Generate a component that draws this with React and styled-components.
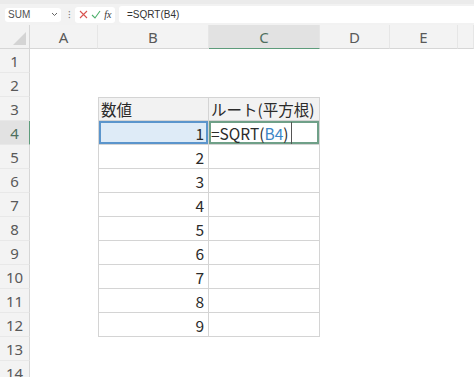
import React from "react";
import styled, { createGlobalStyle, css } from "styled-components";

const Global = createGlobalStyle`
  html, body { margin: 0; padding: 0; background: #fff; }
  body { font-family: "Noto Sans CJK JP", "Noto Sans", sans-serif; overflow: hidden; }
`;

const Page = styled.div`
  width: 474px;
  height: 377px;
  overflow: hidden;
  background: #fff;
  display: flex;
  flex-direction: column;
`;

const TopBar = styled.div`
  height: 26px;
  box-sizing: border-box;
  background: #f2f2f2;
  border-top: 4px solid #ebebeb;
  display: flex;
  align-items: center;
  padding: 2px 0 2px 5px;
  font-family: "Liberation Sans", Arial, sans-serif;
`;

const NameBox = styled.div`
  width: 56px;
  height: 14px;
  background: #fff;
  border-radius: 3px;
  display: flex;
  align-items: center;
  justify-content: space-between;
  padding: 0 3px;
  box-sizing: border-box;
  font-size: 10px;
  color: #505050;
`;

const Dots = styled.div`
  width: 12px;
  text-align: center;
  color: #777;
  font-size: 10px;
  line-height: 1;
  margin-left: 2px;
`;

const ActionBox = styled.div`
  height: 16px;
  width: 40px;
  background: #fff;
  border-radius: 3px;
  display: flex;
  align-items: center;
  justify-content: space-around;
  padding: 0 2px;
  box-sizing: border-box;
`;

const Fx = styled.span`
  font-family: "Liberation Serif", serif;
  font-style: italic;
  font-size: 10px;
  color: #333;
`;

const FormulaInput = styled.div`
  flex: 1;
  height: 17px;
  margin-left: 4px;
  background: #fff;
  border-radius: 3px 0 0 3px;
  display: flex;
  align-items: center;
  padding-left: 8px;
  font-size: 10px;
  color: #333;
`;

const Sheet = styled.div`
  display: grid;
  grid-template-columns: 30px 68px 111px 111px 70px 68px 1fr;
  grid-template-rows: repeat(15, 24px);
  flex: 1;
`;

const Corner = styled.div`
  background: #f2f2f2;
  border-bottom: 1px solid #d6d6d6;
  border-right: 1px solid #d6d6d6;
  box-sizing: border-box;
  display: flex;
  align-items: flex-end;
  justify-content: flex-end;
  padding: 0 3px 3px 0;
`;

const ColHead = styled.div`
  background: ${p => (p.$active ? "#e2e2e2" : "#f3f3f3")};
  border-bottom: 1px solid ${p => (p.$active ? "#5e9c7b" : "#d6d6d6")};
  border-right: 1px solid #e6e6e6;
  box-sizing: border-box;
  display: flex;
  align-items: center;
  justify-content: center;
  font-family: "Noto Sans", sans-serif;
  font-size: 15px;
  color: ${p => (p.$active ? "#4e6f5e" : "#595959")};
`;

const RowHead = styled.div`
  background: ${p => (p.$active ? "#e2e2e2" : "#f3f3f3")};
  border-right: 1px solid ${p => (p.$active ? "#5e9c7b" : "#d6d6d6")};
  border-bottom: 1px solid #e8e8e8;
  box-sizing: border-box;
  display: flex;
  align-items: center;
  justify-content: center;
  font-family: "Noto Sans", sans-serif;
  font-size: 15px;
  color: ${p => (p.$active ? "#4e6f5e" : "#595959")};
`;

const Blank = styled.div`
  grid-column: span ${p => p.$span || 1};
`;

const Cell = styled.div`
  box-sizing: border-box;
  border-right: 1px solid #d4d4d4;
  border-bottom: 1px solid #d4d4d4;
  ${p => p.$first && css`border-left: 1px solid #d4d4d4;`}
  ${p => p.$top && css`border-top: 1px solid #d4d4d4;`}
  background: ${p => (p.$head ? "#f2f2f2" : "#fff")};
  display: flex;
  align-items: center;
  justify-content: ${p => (p.$right ? "flex-end" : "flex-start")};
  padding: 0 4px 0 2px;
  font-size: 15.5px;
  color: #2b2b2b;
  white-space: nowrap;
  overflow: hidden;
  ${p =>
    p.$ref &&
    css`
      background: #deebf7;
      box-shadow: inset 0 0 0 2px #5b95cc;
    `}
  ${p =>
    p.$edit &&
    css`
      box-shadow: inset 0 0 0 2px #6fa088;
    `}
`;

const RefText = styled.span`
  color: #3d86c6;
`;

const Caret = styled.span`
  display: inline-block;
  width: 1px;
  height: 22px;
  background: #555;
  margin-left: 2px;
`;

const cols = ["A", "B", "C", "D", "E"];
const values = [null, null, null, 1, 2, 3, 4, 5, 6, 7, 8, 9];

export default function App() {
  const rows = [];
  for (let r = 1; r <= 14; r++) {
    rows.push(
      <RowHead key={`h${r}`} $active={r === 4}>
        {r}
      </RowHead>
    );
    if (r >= 3 && r <= 12) {
      rows.push(<Blank key={`a${r}`} />);
      if (r === 3) {
        rows.push(
          <Cell key={`b${r}`} $first $top $head>
            数値
          </Cell>
        );
        rows.push(
          <Cell key={`c${r}`} $top $head>
            ルート(平方根)
          </Cell>
        );
      } else {
        rows.push(
          <Cell key={`b${r}`} $first $right $ref={r === 4}>
            {values[r - 1]}
          </Cell>
        );
        rows.push(
          <Cell key={`c${r}`} $edit={r === 4}>
            {r === 4 && (
              <>
                =SQRT(<RefText>B4</RefText>)<Caret />
              </>
            )}
          </Cell>
        );
      }
      rows.push(<Blank key={`d${r}`} $span={3} />);
    } else {
      rows.push(<Blank key={`x${r}`} $span={6} />);
    }
  }

  return (
    <Page>
      <Global />
      <TopBar>
        <NameBox>
          <span>SUM</span>
          <svg width="7" height="5" viewBox="0 0 7 5">
            <path d="M1 1 L3.5 3.5 L6 1" fill="none" stroke="#666" strokeWidth="1" />
          </svg>
        </NameBox>
        <Dots>⁝</Dots>
        <ActionBox>
          <svg width="9" height="9" viewBox="0 0 9 9">
            <path d="M1 1 L8 8 M8 1 L1 8" stroke="#d9534f" strokeWidth="1.1" />
          </svg>
          <svg width="10" height="9" viewBox="0 0 10 9">
            <path d="M1 5 L4 8 L9 1" fill="none" stroke="#4caf6a" strokeWidth="1.1" />
          </svg>
          <Fx>fx</Fx>
        </ActionBox>
        <FormulaInput>=SQRT(B4)</FormulaInput>
      </TopBar>
      <Sheet>
        <Corner>
          <svg width="13" height="13" viewBox="0 0 13 13">
            <path d="M13 0 L13 13 L0 13 Z" fill="#d4d4d4" />
          </svg>
        </Corner>
        {cols.map(c => (
          <ColHead key={c} $active={c === "C"}>
            {c}
          </ColHead>
        ))}
        <ColHead />
        {rows}
      </Sheet>
    </Page>
  );
}
